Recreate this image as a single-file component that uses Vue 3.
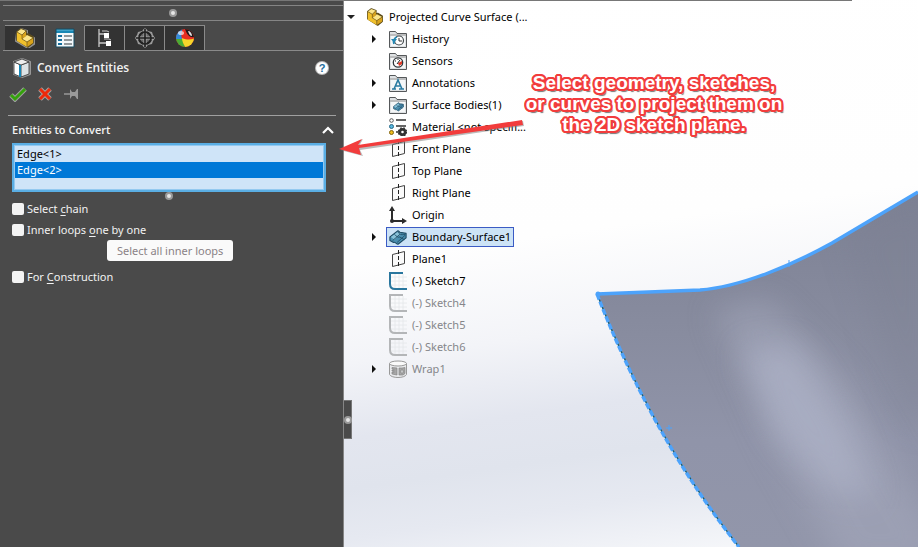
<script setup>
import { ref } from 'vue'

const tabs = [
  { id: 'part', label: 'Feature tree' },
  { id: 'props', label: 'Property manager' },
  { id: 'config', label: 'Configurations' },
  { id: 'target', label: 'Dimensions' },
  { id: 'ball', label: 'Display' }
]
const activeTab = ref('props')
const entities = ['Edge<1>', 'Edge<2>']
const selected = ref('Edge<2>')

const nodes = [
  { icon: 'history', text: 'History', open: true },
  { icon: 'sensors', text: 'Sensors' },
  { icon: 'notes', text: 'Annotations', open: true },
  { icon: 'bodies', text: 'Surface Bodies(1)', open: true },
  { icon: 'material', text: 'Material <not specifi...' },
  { icon: 'plane', text: 'Front Plane' },
  { icon: 'plane', text: 'Top Plane' },
  { icon: 'plane', text: 'Right Plane' },
  { icon: 'origin', text: 'Origin' },
  { icon: 'surface', text: 'Boundary-Surface1', open: true, picked: true },
  { icon: 'plane', text: 'Plane1' },
  { icon: 'sketch', text: '(-) Sketch7' },
  { icon: 'sketch', text: '(-) Sketch4', dim: true },
  { icon: 'sketch', text: '(-) Sketch5', dim: true },
  { icon: 'sketch', text: '(-) Sketch6', dim: true },
  { icon: 'wrap', text: 'Wrap1', open: true, dim: true }
]
const folders = ['history', 'sensors', 'notes', 'bodies']
</script>

<template>
  <div class="app">
    <svg class="defs" width="0" height="0" aria-hidden="true">
      <symbol id="i-part" viewBox="0 0 20 20">
        <path d="M2 4l4-3 5 2v4l2-1 5 3v6l-5 4-11-7z" fill="#6b5514" stroke="#5a4a1a" stroke-width="1.6" stroke-linejoin="round" />
        <path d="M2 4l5 3v4l5 3v5L2 13z" fill="#f0c02c" />
        <path d="M2 4l4-3 5 2-4 4zM7 11l5-4 6 3-6 4z" fill="#fbe58a" />
        <path d="M11 3v5l-4 3V7zM18 10v5l-6 4v-5z" fill="#d9a31c" />
        <path d="M2 4l5 3 4-4M7 7v4l5 3 6-4M12 14v5" fill="none" stroke="#70571a" stroke-width=".7" />
      </symbol>
      <symbol id="i-surface" viewBox="0 0 20 20">
        <path d="M1 10l9-7c2 1 2 3 4 2l5 1v5l-9 7c-2 0-3-3-5-2l-4-2z" fill="#4b8fb0" stroke="#1d4a63" stroke-width="1.2" stroke-linejoin="round" />
        <path d="M2 10l8-6c1 2 3 3 4 2l-8 7z" fill="#8ac3da" />
        <path d="M4 14l8-7M9 16l9-8M6 7c2 2 4 4 6 3l5 3M10 4c1 3 3 4 8 3" fill="none" stroke="#1f4d66" stroke-width="1" />
      </symbol>
    </svg>

    <aside class="panel">
      <div class="grip"><span class="dot"></span></div>
      <nav class="tabs">
        <button
          v-for="t in tabs" :key="t.id" type="button" class="tab"
          :class="{ active: activeTab === t.id }" :aria-label="t.label" @click="activeTab = t.id"
        >
          <svg v-if="t.id === 'part'" width="20" height="20"><path d="M2 5l4-4 6 2v3l7 4v6l-6 4L1 13z" fill="none" stroke="#929292" stroke-width="2" /><use href="#i-part" /></svg>
          <svg v-else-if="t.id === 'props'" width="20" height="20" viewBox="0 0 20 20">
            <path d="M1 1h18v18H1z" fill="#f4f8fa" />
            <path d="M1 1h18v4H1z" fill="#1987b4" />
            <path d="M1 2h18" stroke="#66bddb" />
            <path d="M3 7h4v2H3zM3 11h4v2H3zM3 15h4v2H3z" fill="#156d9b" />
            <path d="M9 8h8M9 12h8M9 16h8" stroke="#30383d" />
            <path d="M1 1h18v18H1z" fill="none" stroke="#164a60" />
          </svg>
          <svg v-else-if="t.id === 'config'" width="20" height="20" viewBox="0 0 20 20">
            <path d="M4 1v18M4 6h5M4 15h7" fill="none" stroke="#c8c8c8" stroke-width="1.3" />
            <path d="M9 5h5v5H9zM11 13h5v5h-5z" fill="#fff" />
            <path d="M7 3h5l2 1M9 11h5l2 1" fill="none" stroke="#ccc" />
          </svg>
          <svg v-else-if="t.id === 'target'" width="20" height="20" viewBox="0 0 20 20">
            <path d="M10 0l3 3 4 1 1 3 2 3-2 3-1 3-4 1-3 3-3-3-4-1-1-3-2-3 2-3 1-3 4-1z" fill="#9a9a9a" />
            <circle cx="10" cy="10" r="6" fill="#666" stroke="#222" stroke-width="2" />
            <path d="M10 1v18M1 10h18" stroke="#a5a5a5" stroke-width="3" />
            <path d="M10 1v18M1 10h18" stroke="#1c1c1c" stroke-width="1.6" />
            <circle cx="10" cy="10" r="6" fill="none" stroke="#222" stroke-width="1.6" />
          </svg>
          <svg v-else width="20" height="20" viewBox="0 0 20 20">
            <clipPath id="ballClip"><circle cx="10" cy="10" r="9" /></clipPath>
            <g clip-path="url(#ballClip)">
              <path d="M0 0h20v20H0z" fill="#e62d21" />
              <path d="M0 0h8c-2 4-2 7-1 11H0z" fill="#318bd9" />
              <path d="M0 11h8c0 4 1 6 3 9H0z" fill="#49ab35" />
              <path d="M7 10c5 2 9 2 13 0v10h-9c-2-3-4-6-4-10z" fill="#f7d52b" />
              <path d="M10 1c5-1 9 2 9 8-4 1-7-2-9-8z" fill="#21191b" />
              <path d="M13 3c2 0 4 2 4 5-2 0-3-2-4-5z" fill="#ddd" />
            </g>
            <ellipse cx="6" cy="5" rx="3" ry="2" fill="#fff" opacity=".65" />
          </svg>
        </button>
      </nav>

      <header class="title">
        <svg width="20" height="20" viewBox="0 0 20 20">
          <path d="M2 4l8-3 8 3v12l-8 3-8-3z" fill="#f3f6f7" stroke="#999" stroke-width="2" stroke-linejoin="round" />
          <path d="M2 4l7 3v12l-7-3z" fill="#fff" stroke="#333" stroke-width=".8" />
          <path d="M9 7l8-3v12l-8 3z" fill="#dde3e6" stroke="#333" stroke-width=".8" />
          <path d="M2 4l8-3 7 3-8 3z" fill="#eee" stroke="#333" stroke-width=".8" />
          <path d="M8 7v12" stroke="#1687b7" stroke-width="2" />
        </svg>
        <h1>Convert Entities</h1>
        <button type="button" class="plain help" aria-label="Help">?</button>
      </header>

      <div class="actions">
        <button type="button" class="plain" aria-label="OK">
          <svg width="18" height="16" viewBox="0 0 18 16"><path d="M2 9l4 4L16 3" fill="none" stroke="#a0a0a0" stroke-width="5" /><path d="M2 9l4 4L16 3" fill="none" stroke="#35a10c" stroke-width="3" /></svg>
        </button>
        <button type="button" class="plain" aria-label="Cancel">
          <svg width="16" height="16" viewBox="0 0 16 16"><path d="M3 3l10 10M13 3L3 13" stroke="#a5a09e" stroke-width="5" /><path d="M3 3l10 10M13 3L3 13" stroke="#ed2909" stroke-width="3" /></svg>
        </button>
        <button type="button" class="plain" aria-label="Keep visible">
          <svg width="16" height="16" viewBox="0 0 16 16"><path d="M1 8h7" stroke="#999" stroke-width="1.5" /><path d="M7 3l2 3h3l2-3h1v10h-1l-2-3H9l-2 3z" fill="#999" /></svg>
        </button>
      </div>

      <section class="group">
        <div class="group-head">
          <h2>Entities to Convert</h2>
          <button type="button" class="plain" aria-label="Collapse">
            <svg width="12" height="8" viewBox="0 0 12 8"><path d="M1 7l5-5 5 5" fill="none" stroke="#fff" stroke-width="2.2" /></svg>
          </button>
        </div>
        <ul class="entities" role="listbox" aria-label="Entities to Convert">
          <li v-for="e in entities" :key="e" role="option" :aria-selected="selected === e" :class="{ on: selected === e }" @click="selected = e">{{ e }}</li>
        </ul>
        <div class="resize"><span class="dot"></span></div>
        <div class="options">
          <label><input type="checkbox"><span>Select <u>c</u>hain</span></label>
          <label><input type="checkbox"><span>Inner loops <u>o</u>ne by one</span></label>
          <button type="button" class="loops" disabled>Select all inner loops</button>
          <label><input type="checkbox"><span>For <u>C</u>onstruction</span></label>
        </div>
      </section>
    </aside>

    <main class="viewport">
      <svg class="scene" viewBox="0 0 574 547" preserveAspectRatio="xMinYMin slice" aria-hidden="true">
        <defs>
          <linearGradient id="skin" x1="0" y1="0" x2="0" y2="1">
            <stop offset="0" stop-color="#7d8194" />
            <stop offset=".4" stop-color="#888c9f" />
            <stop offset=".7" stop-color="#9094a9" />
            <stop offset="1" stop-color="#9296aa" />
          </linearGradient>
          <clipPath id="skinClip"><path d="M253 294L356 290C398 287 450 264 488 243L574 192V547H395C340 477 293 397 253 294z" /></clipPath>
          <filter id="soft" x="-60%" y="-40%" width="220%" height="180%"><feGaussianBlur stdDeviation="15" /></filter>
        </defs>
        <path d="M253 294L356 290C398 287 450 264 488 243L574 192V547H395C340 477 293 397 253 294z" fill="url(#skin)" />
        <g clip-path="url(#skinClip)">
          <path d="M500 230L590 190V430L560 420z" fill="#7b8092" opacity=".35" filter="url(#soft)" />
          <path d="M370 310L425 300L500 375L590 530V570L500 570L430 445z" fill="#a4a8bc" opacity=".55" filter="url(#soft)" />
          <path d="M398 350L450 345L505 430L530 500L485 490L432 430z" fill="#b0b5ca" opacity=".65" filter="url(#soft)" />
        </g>
        <path d="M253 294L356 290C398 287 450 264 488 243L574 192" fill="none" stroke="#4da3fb" stroke-width="3.4" />
        <path d="M253 294C293 397 340 477 395 547" fill="none" stroke="#176077" stroke-width="1.4" />
        <path d="M253 294C293 397 340 477 395 547" fill="none" stroke="#4da3fb" stroke-width="3.4" stroke-dasharray="6 2" />
        <circle cx="254" cy="294" r="2.5" fill="#4da3fb" />
        <path d="M445 260v7M325 425v6M322 428h6" stroke="#4da3fb" />
      </svg>

      <div class="tree" role="tree">
        <div class="row root" role="treeitem">
          <span class="twist"><svg width="8" height="6"><path d="M0 1h8L4 5z" fill="#222" /></svg></span>
          <svg class="icon" width="18" height="18"><use href="#i-part" /></svg>
          <span class="name">Projected Curve Surface (...</span>
        </div>
        <div v-for="n in nodes" :key="n.text" class="row" role="treeitem">
          <span class="twist"><svg v-if="n.open" width="6" height="8"><path d="M1 0v8l4-4z" fill="#111" /></svg></span>
          <span class="entry" :class="{ picked: n.picked, dim: n.dim }">
            <svg class="icon" width="18" height="18" viewBox="0 0 18 18">
              <template v-if="folders.includes(n.icon)">
                <path d="M.5 17.500V1.500h6l1.500 2h9.500v14z" fill="#dfe2e4" stroke="#55585a" />
                <path d="M2 6h14v10H2z" fill="#f5f7f8" />
                <path d="M1 5h16" stroke="#999" />
              </template>
              <template v-if="n.icon === 'history'">
                <circle cx="10" cy="10.500" r="4.500" fill="#fff" stroke="#40474b" stroke-width="1.200" />
                <path d="M10 8v3h3" fill="none" stroke="#333" />
                <path d="M5 14c-1-3 0-6 3-7" fill="none" stroke="#2489b4" stroke-width="1.800" />
                <path d="M2 9h6l-3 4z" fill="#2489b4" />
              </template>
              <template v-else-if="n.icon === 'sensors'">
                <circle cx="9" cy="10.500" r="4.700" fill="#fff" stroke="#30363a" stroke-width="1.300" />
                <path d="M9 11l4-2v3l-3 2z" fill="#e33826" />
                <path d="M8 12l3-4M6 9h1M9 7v1" stroke="#222" />
              </template>
              <path v-else-if="n.icon === 'notes'" d="M3 15h4M10 15h5M5 15l4-9 4 9M7 12h5" fill="none" stroke="#2a7ba1" stroke-width="1.600" />
              <use v-else-if="n.icon === 'bodies'" href="#i-surface" x="3" y="5" width="13" height="11" />
              <template v-else-if="n.icon === 'material'">
                <path d="M7 2h10M7 8h10M7 14h4" stroke="#333" stroke-width="1.600" />
                <circle cx="2.500" cy="2.500" r="1.800" fill="#fff" stroke="#555" />
                <circle cx="2.500" cy="8.500" r="2" fill="#55b5dd" stroke="#286a88" />
                <circle cx="2.500" cy="14.500" r="2" fill="#efbd1b" stroke="#80630e" />
                <circle cx="13.500" cy="14" r="2.600" fill="none" stroke="#333" stroke-width="2.600" />
                <circle cx="13.500" cy="14" r="4" fill="none" stroke="#333" stroke-width="1.500" stroke-dasharray="1.600 1.600" />
              </template>
              <template v-else-if="n.icon === 'plane'">
                <path d="M3.500 4.500l12-3v12l-12 3z" fill="#fafafa" stroke="#444" />
                <path d="M9.500 0v18" stroke="#222" stroke-dasharray="4 2" />
              </template>
              <template v-else-if="n.icon === 'origin'">
                <path d="M3 3v12h12" fill="none" stroke="#2b2b2b" stroke-width="2" />
                <path d="M0 5l3-5 3 5zM13 12l5 3-5 3z" fill="#2b2b2b" />
                <circle cx="3" cy="15" r="2" fill="#2b2b2b" />
              </template>
              <use v-else-if="n.icon === 'surface'" href="#i-surface" />
              <template v-else-if="n.icon === 'sketch'">
                <path d="M6 2v14M10 2v14M14 2v14M2 5h16M2 9h16M2 13h16" stroke="#e4e7ea" stroke-width=".8" />
                <path d="M14 1H1v11c0 3 2 5 5 5h12" fill="none" :stroke="n.dim ? '#b4b6b8' : '#29769e'" stroke-width="2" />
              </template>
              <template v-else-if="n.icon === 'wrap'">
                <path d="M.5 3.500v11c2 4 15 4 17 0v-11" fill="#e9eaec" stroke="#999" />
                <ellipse cx="9" cy="3.500" rx="8.500" ry="2.500" fill="#fafafa" stroke="#999" />
                <path d="M3 7.500l5 .5v7l-5-1v-2l2 .5v-1l-2-.5v-1l2 .5v-1l-2-.5zM10 8h3l3-.5v6l-2 1.500h-4zM12 10v3h2v-3z" fill="#a6a6a6" stroke="#858585" stroke-width=".7" fill-rule="evenodd" />
              </template>
            </svg>
            <span class="name">{{ n.text }}</span>
          </span>
        </div>
      </div>
      <div class="topline"></div>
      <div class="splitter"><span class="dot"></span></div>
      <svg class="arrow" width="190" height="40" viewBox="0 0 190 40" aria-hidden="true">
        <path d="M2 35L25 24L21 31L185 6L186 11L22 35L25 41z" fill="#777" opacity=".5" />
        <path d="M1 34L24 24L20 30L184 5L185 10L21 33L23 40z" fill="#f23c3c" />
      </svg>
      <p class="callout">Select geometry, sketches,<br>or curves to project them on<br>the 2D sketch plane.</p>
    </main>
  </div>
</template>

<style>
body { margin: 0; }
</style>

<style scoped>
.app {
  display: grid;
  grid-template-columns: 344px minmax(0, 1fr);
  min-height: 100vh;
  overflow: hidden;
  font: 11px/16px "Noto Sans", "Open Sans", sans-serif;
  color: #000;
}
.defs { position: absolute; }
.panel {
  box-sizing: border-box;
  background: #4a4a4a;
  border-right: 1px solid #858585;
  border-top: 1px solid #777;
  color: #f2f2f2;
}
.panel svg { display: block; }
.dot {
  display: block;
  box-sizing: border-box;
  width: 8px;
  height: 8px;
  border: 2px solid #999;
  border-radius: 50%;
  background: #e6e6e6;
}
.grip {
  display: grid;
  place-items: center;
  box-sizing: border-box;
  height: 16px;
  margin: 4px 0 0 3px;
  border-top: 1px solid #858585;
  border-bottom: 1px solid #858585;
}
.tabs {
  display: flex;
  margin: 4px 0 0 3px;
  padding-left: 2px;
  box-shadow: inset 0 -1px #8a8a8a;
}
.tab {
  display: grid;
  place-items: center;
  box-sizing: border-box;
  width: 40px;
  height: 26px;
  padding: 0;
  border: solid #8a8a8a;
  border-width: 1px 1px 1px 0;
  background: #333;
}
.tab.active { background: #4a4a4a; border-bottom-color: #4a4a4a; border-top-color: #4a4a4a; }
.title { display: flex; align-items: center; gap: 5px; padding: 7px 15px 0 12px; }
h1, h2 { margin: 0; line-height: 20px; font-family: "Open Sans", "Noto Sans", sans-serif; font-weight: 600; }
h1 { flex: 1; font-size: 12px; }
h2 { font-size: 11px; }
.plain { padding: 0; border: 0; background: none; }
.help {
  width: 12px;
  height: 12px;
  border-radius: 50%;
  background: #fff;
  color: #1c6c9c;
  font: bold 11px/12px "Liberation Sans", sans-serif;
  box-shadow: 0 0 0 1px #bbb;
}
.actions { display: flex; gap: 10px; padding: 8px 9px 0; }
.group { margin: 13px 7px 0 8px; border-top: 1px solid #a0a0a0; padding-left: 4px; }
.group-head { display: flex; align-items: center; justify-content: space-between; padding: 4px 2px 3px 0; }
.entities {
  box-sizing: border-box;
  min-height: 49px;
  margin: 0 10px 0 0;
  border: 2px solid #5aaee4;
  box-shadow: inset 0 0 0 1px #94c9f0;
  padding: 1px;
  background: #cfe4f8;
  color: #000;
  list-style: none;
}
.entities li { height: 16px; padding-left: 2px; }
.entities li.on { background: #0078d7; color: #fff; }
.resize { display: grid; justify-content: center; height: 6px; margin-right: 10px; }
.options { display: flex; flex-direction: column; align-items: flex-start; }
.options label { display: flex; align-items: center; gap: 3px; height: 21px; }
.options u { text-underline-offset: 2px; }
.options input {
  appearance: none;
  width: 12px;
  height: 12px;
  margin: 0;
  border-radius: 2px;
  background: #f3f3f3;
}
.loops {
  height: 21px;
  margin: 0 0 5px 95px;
  padding: 0 10px;
  border: 0;
  border-radius: 3px;
  background: #fafafa;
  color: #8a8286;
  font: inherit;
}
.viewport {
  position: relative;
  background: linear-gradient(172deg, #fff 0%, #fefefe 42%, #f3f4f8 58%, #e3e6ef 70%, #e0e4ed 78%, #e6e9f1 86%, #f8f9fb 98%);
}
.scene { position: absolute; inset: 0; width: 100%; height: 100%; }
.topline { position: absolute; top: 0; left: 0; right: 66px; height: 1px; background: #777; }
.tree { position: relative; padding-top: 6px; }
.row { display: flex; align-items: center; height: 22px; padding-left: 26px; white-space: nowrap; }
.row.root { padding-left: 3px; }
.twist { display: grid; place-items: center; width: 8px; }
.root .twist { margin-right: 11px; }
.root .name { margin-left: 5px; }
.twist svg, .icon { display: block; }
.entry {
  display: flex;
  align-items: center;
  gap: 5px;
  box-sizing: border-box;
  height: 20px;
  margin-left: 8px;
  padding: 0 2px;
  border: 1px solid transparent;
}
.entry.picked { border-color: #3b5bc4; background: #cce3f6; }
.entry.dim .name { color: #85868a; }
.splitter {
  position: absolute;
  left: 0;
  top: 400px;
  display: grid;
  place-items: center;
  box-sizing: border-box;
  width: 8px;
  height: 39px;
  background: #4a4a4a;
  border: 1px solid #777;
  border-left: 0;
}
.arrow { position: absolute; left: -6px; top: 115px; overflow: visible; }
.callout {
  position: absolute;
  left: 180px;
  top: 72px;
  width: 260px;
  margin: 0;
  color: #fff;
  font: bold 19px/21px "Liberation Sans", sans-serif;
  text-align: center;
  white-space: nowrap;
  text-shadow:
    2px 0 #f23c3c, -2px 0 #f23c3c, 0 2px #f23c3c, 0 -2px #f23c3c,
    2px 1px #f23c3c, -2px 1px #f23c3c, 2px -1px #f23c3c, -2px -1px #f23c3c,
    1px 2px #f23c3c, -1px 2px #f23c3c, 1px -2px #f23c3c, -1px -2px #f23c3c,
    2px 3px 1px #777;
}
</style>
